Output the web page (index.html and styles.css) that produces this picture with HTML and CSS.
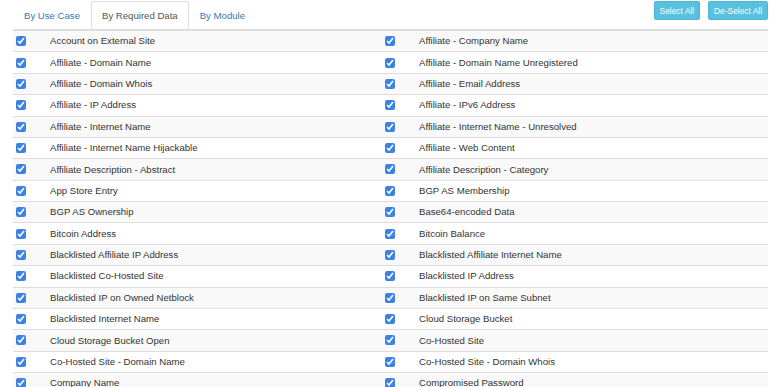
FILE: index.html
```html
<!DOCTYPE html>
<html>
<head>
<meta charset="utf-8">
<link rel="stylesheet" href="styles.css">
</head>
<body>
<div class="page">
  <div class="top">
    <ul class="tabs">
      <li class="tab"><a>By Use Case</a></li>
      <li class="tab active"><a>By Required Data</a></li>
      <li class="tab"><a>By Module</a></li>
    </ul>
    <div class="actions">
      <button class="btn">Select All</button>
      <button class="btn">De-Select All</button>
    </div>
  </div>
  <table class="grid">
    <colgroup><col class="c-chk"><col class="c-lbl"><col class="c-chk"><col></colgroup>
    <tbody>
      <tr><td class="chk"><input type="checkbox" checked></td><td>Account on External Site</td><td class="chk"><input type="checkbox" checked></td><td>Affiliate - Company Name</td></tr>
      <tr><td class="chk"><input type="checkbox" checked></td><td>Affiliate - Domain Name</td><td class="chk"><input type="checkbox" checked></td><td>Affiliate - Domain Name Unregistered</td></tr>
      <tr><td class="chk"><input type="checkbox" checked></td><td>Affiliate - Domain Whois</td><td class="chk"><input type="checkbox" checked></td><td>Affiliate - Email Address</td></tr>
      <tr><td class="chk"><input type="checkbox" checked></td><td>Affiliate - IP Address</td><td class="chk"><input type="checkbox" checked></td><td>Affiliate - IPv6 Address</td></tr>
      <tr><td class="chk"><input type="checkbox" checked></td><td>Affiliate - Internet Name</td><td class="chk"><input type="checkbox" checked></td><td>Affiliate - Internet Name - Unresolved</td></tr>
      <tr><td class="chk"><input type="checkbox" checked></td><td>Affiliate - Internet Name Hijackable</td><td class="chk"><input type="checkbox" checked></td><td>Affiliate - Web Content</td></tr>
      <tr><td class="chk"><input type="checkbox" checked></td><td>Affiliate Description - Abstract</td><td class="chk"><input type="checkbox" checked></td><td>Affiliate Description - Category</td></tr>
      <tr><td class="chk"><input type="checkbox" checked></td><td>App Store Entry</td><td class="chk"><input type="checkbox" checked></td><td>BGP AS Membership</td></tr>
      <tr><td class="chk"><input type="checkbox" checked></td><td>BGP AS Ownership</td><td class="chk"><input type="checkbox" checked></td><td>Base64-encoded Data</td></tr>
      <tr><td class="chk"><input type="checkbox" checked></td><td>Bitcoin Address</td><td class="chk"><input type="checkbox" checked></td><td>Bitcoin Balance</td></tr>
      <tr><td class="chk"><input type="checkbox" checked></td><td>Blacklisted Affiliate IP Address</td><td class="chk"><input type="checkbox" checked></td><td>Blacklisted Affiliate Internet Name</td></tr>
      <tr><td class="chk"><input type="checkbox" checked></td><td>Blacklisted Co-Hosted Site</td><td class="chk"><input type="checkbox" checked></td><td>Blacklisted IP Address</td></tr>
      <tr><td class="chk"><input type="checkbox" checked></td><td>Blacklisted IP on Owned Netblock</td><td class="chk"><input type="checkbox" checked></td><td>Blacklisted IP on Same Subnet</td></tr>
      <tr><td class="chk"><input type="checkbox" checked></td><td>Blacklisted Internet Name</td><td class="chk"><input type="checkbox" checked></td><td>Cloud Storage Bucket</td></tr>
      <tr><td class="chk"><input type="checkbox" checked></td><td>Cloud Storage Bucket Open</td><td class="chk"><input type="checkbox" checked></td><td>Co-Hosted Site</td></tr>
      <tr><td class="chk"><input type="checkbox" checked></td><td>Co-Hosted Site - Domain Name</td><td class="chk"><input type="checkbox" checked></td><td>Co-Hosted Site - Domain Whois</td></tr>
      <tr><td class="chk"><input type="checkbox" checked></td><td>Company Name</td><td class="chk"><input type="checkbox" checked></td><td>Compromised Password</td></tr>
    </tbody>
  </table>
</div>
</body>
</html>
```

FILE: styles.css
```css
html, body {
  margin: 0;
  padding: 0;
  background: #fff;
}

body {
  font-family: "Liberation Sans", Arial, sans-serif;
  font-size: 9.6px;
  line-height: 13.72px;
  color: #333;
  overflow: hidden;
}

.page {
  padding: 0 1px 0 13px;
}

.top {
  display: flex;
  justify-content: space-between;
  align-items: flex-start;
  height: 29px;
  padding-top: 1px;
  box-sizing: border-box;
}

.tabs {
  display: flex;
  list-style: none;
  margin: 0;
  padding: 0;
}

.tab a {
  display: flex;
  align-items: center;
  box-sizing: border-box;
  height: 28px;
  padding: 1px 10px 0;
  border: 1px solid transparent;
  border-bottom: 0;
  border-radius: 3px 3px 0 0;
  color: #337ab7;
  cursor: pointer;
}

.tab.active a {
  color: #555;
  background: #fff;
  border-color: #ddd;
}

.actions {
  display: flex;
  gap: 8px;
}

.btn {
  height: 19px;
  padding: 0 5px;
  font-family: "Liberation Sans", Arial, sans-serif;
  font-size: 8.4px;
  color: #fff;
  background: #5bc0de;
  border: 1px solid #46b8da;
  border-radius: 2px;
  cursor: pointer;
}

.grid {
  width: 100%;
  table-layout: fixed;
  border-collapse: collapse;
  border-top: 2px solid #ddd;
}

.c-chk {
  width: 33.7px;
}

.c-lbl {
  width: 335.3px;
}

.grid td {
  padding: 3.33px;
  border-bottom: 1px solid #ddd;
  white-space: nowrap;
  overflow: hidden;
  vertical-align: middle;
}

.grid tr:nth-child(odd) td {
  background: #f9f9f9;
}

.grid td.chk {
  padding-left: 3px;
}

.grid input[type="checkbox"] {
  display: block;
  width: 10px;
  height: 10px;
  margin: 0;
  accent-color: #3b82e6;
}
```
